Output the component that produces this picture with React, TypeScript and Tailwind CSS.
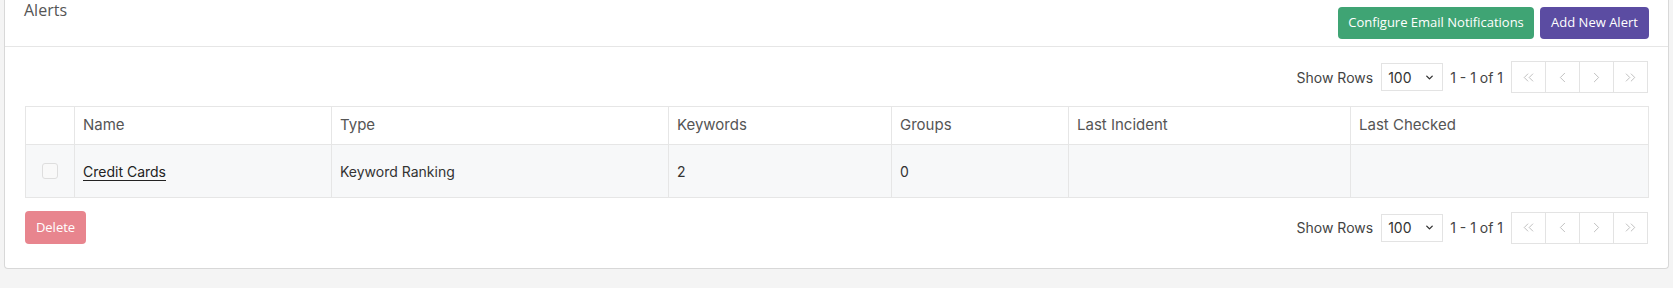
import React from "react";

const inter = { fontFamily: "Inter, 'Noto Sans', sans-serif" };

function Chevs({ kind }: { kind: "first" | "prev" | "next" | "last" }) {
  const paths: Record<string, string[]> = {
    first: ["M11 17l-5-5 5-5", "M18 17l-5-5 5-5"],
    prev: ["M15 18l-6-6 6-6"],
    next: ["M9 18l6-6-6-6"],
    last: ["M6 17l5-5-5-5", "M13 17l5-5-5-5"],
  };
  return (
    <svg width="17" height="17" viewBox="0 0 24 24" fill="none" stroke="#b5b5b5" strokeWidth="1.2" strokeLinecap="round" strokeLinejoin="round">
      {paths[kind].map((d) => (
        <path key={d} d={d} />
      ))}
    </svg>
  );
}

function Pager() {
  return (
    <div className="flex items-center text-[14px] text-[#444]" style={inter}>
      <span>Show Rows</span>
      <div className="ml-[8px] flex h-[28px] w-[62px] items-center justify-between border border-[#e3e3e3] bg-white pl-[6px] pr-[7px] text-[#333]">
        <span>100</span>
        <svg width="11" height="11" viewBox="0 0 24 24" fill="none" stroke="#333" strokeWidth="3" strokeLinecap="round" strokeLinejoin="round">
          <path d="M6 9l6 6 6-6" />
        </svg>
      </div>
      <span className="ml-[7px]">1 - 1 of 1</span>
      <div className="ml-[8px] flex">
        {(["first", "prev", "next", "last"] as const).map((k) => (
          <div key={k} className="-ml-px flex h-[32px] w-[35px] items-center justify-center border border-[#e3e3e3] bg-white first:ml-0">
            <Chevs kind={k} />
          </div>
        ))}
      </div>
    </div>
  );
}

const cols = [
  { label: "", w: 49 },
  { label: "Name", w: 257 },
  { label: "Type", w: 337 },
  { label: "Keywords", w: 223 },
  { label: "Groups", w: 177 },
  { label: "Last Incident", w: 282 },
  { label: "Last Checked", w: 298 },
];

export default function App() {
  return (
    <div className="h-[288px] w-full overflow-hidden bg-[#f4f4f4]">
      <div className="ml-[4px] w-[1665px] rounded-b-[4px] border border-t-0 border-[#d8d8d8] bg-white">
        <div className="flex h-[47px] items-start justify-between border-b border-[#e6e6e6] pl-[19px] pr-[19px]">
          <div className="pt-[1px] text-[16px] leading-[18px] text-[#555]" style={{ fontFamily: "'Open Sans', sans-serif" }}>
            Alerts
          </div>
          <div className="mt-[7px] flex gap-[6px] text-[13px] text-white" style={{ fontFamily: "'Open Sans', sans-serif" }}>
            <button className="h-[32px] w-[196px] rounded-[4px] bg-[#3fa474]">Configure Email Notifications</button>
            <button className="h-[32px] w-[109px] rounded-[4px] bg-[#5b4ca2]">Add New Alert</button>
          </div>
        </div>
        <div className="px-[20px] pb-[24px] pt-[14px]">
          <div className="flex justify-end">
            <Pager />
          </div>
          <table className="mt-[13px] w-[1623px] table-fixed border-collapse text-[14px]" style={inter}>
            <colgroup>
              {cols.map((c, i) => (
                <col key={i} style={{ width: c.w }} />
              ))}
            </colgroup>
            <thead>
              <tr className="h-[38px]">
                {cols.map((c, i) => (
                  <th key={i} className="border border-[#e6e6e6] px-2 text-left text-[15px] font-normal text-[#555]">
                    {c.label}
                  </th>
                ))}
              </tr>
            </thead>
            <tbody>
              <tr className="h-[53px] bg-[#f7f8f9] text-[#333]">
                <td className="border border-[#e6e6e6]">
                  <div className="mx-auto h-[16px] w-[16px] rounded-[3px] border border-[#dedede] bg-[#f9f9f9]" />
                </td>
                <td className="border border-[#e6e6e6] px-2">
                  <span className="text-[#222] underline underline-offset-[3px]">Credit Cards</span>
                </td>
                <td className="border border-[#e6e6e6] px-2">Keyword Ranking</td>
                <td className="border border-[#e6e6e6] px-2">2</td>
                <td className="border border-[#e6e6e6] px-2">0</td>
                <td className="border border-[#e6e6e6] px-2"></td>
                <td className="border border-[#e6e6e6] px-2"></td>
              </tr>
            </tbody>
          </table>
          <div className="mt-[13px] flex items-center justify-between">
            <button
              className="h-[33px] w-[61px] rounded-[4px] bg-[#e8858e] text-[13px] text-white"
              style={{ fontFamily: "'Open Sans', sans-serif" }}
            >
              Delete
            </button>
            <Pager />
          </div>
        </div>
      </div>
    </div>
  );
}
